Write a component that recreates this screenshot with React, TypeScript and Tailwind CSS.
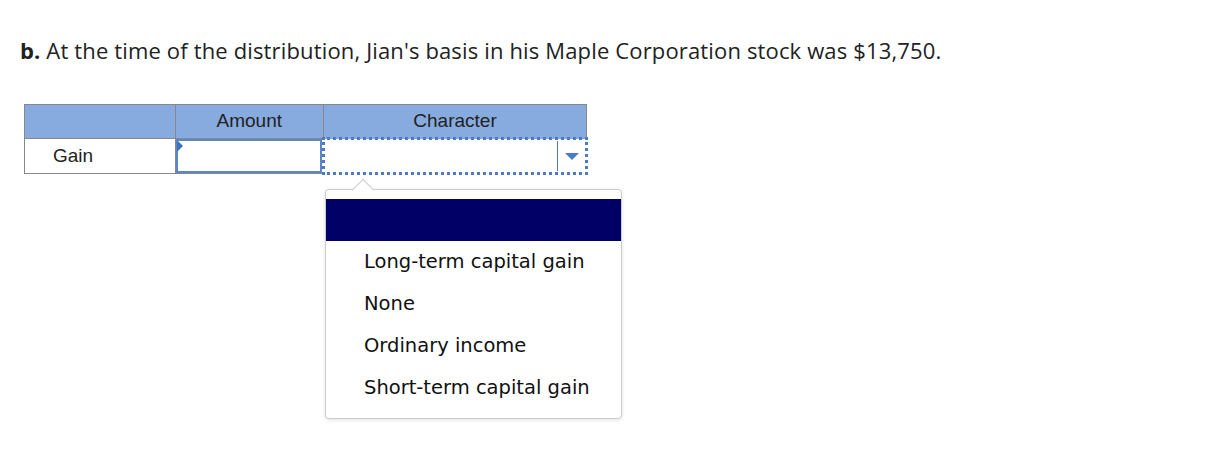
import { useState } from 'react'

const options = ['Long-term capital gain', 'None', 'Ordinary income', 'Short-term capital gain']

export default function App() {
  const [amount, setAmount] = useState('')

  return (
    <div className="w-[1228px] h-[466px] bg-white text-[#222] relative overflow-hidden">
      <p className="pl-5 pt-[36px] text-[22px] tracking-[0.15px] leading-[28px] font-['Open_Sans','Helvetica',sans-serif]">
        <b>b.</b> At the time of the distribution, Jian&apos;s basis in his Maple Corporation stock was $13,750.
      </p>

      <div className="ml-6 mt-[40px] relative w-[564px]">
        <table className="border-collapse font-['Liberation_Sans','Arial',sans-serif] text-[19px] text-[#222]">
          <thead>
            <tr className="h-[34px] bg-[#87abdf]">
              <th className="w-[151px] border border-[#888] font-normal" />
              <th className="w-[149px] border border-[#888] font-normal">Amount</th>
              <th className="w-[264px] border border-[#888] font-normal">Character</th>
            </tr>
          </thead>
          <tbody>
            <tr className="h-[35px]">
              <td className="border border-[#888] pl-7">Gain</td>
              <td className="border border-[#888] p-0 relative">
                <input
                  value={amount}
                  onChange={(e) => setAmount(e.target.value)}
                  className="block w-full h-[34px] border-2 border-[#5a87c9] outline-none px-2"
                />
                <span className="absolute left-[1px] top-[1px] w-0 h-0 border-y-[6px] border-y-transparent border-l-[6px] border-l-[#3c72c0]" />
              </td>
              <td className="p-0 border-[3px] border-dotted border-[#4a7bc4]">
                <div className="flex h-[30px] bg-white">
                  <div className="flex-1" />
                  <div className="w-[28px] border-l border-[#4a7bc4] flex items-center justify-center">
                    <span className="w-0 h-0 border-x-[7px] border-x-transparent border-t-[7px] border-t-[#4a7bc4]" />
                  </div>
                </div>
              </td>
            </tr>
          </tbody>
        </table>

        {/* dropdown menu */}
        <div className="absolute left-[301px] top-[85px] w-[297px] h-[230px] bg-white border border-[#ccc] rounded-[4px] shadow-[0_1px_4px_rgba(0,0,0,0.12)] pt-[9px]">
          <span className="absolute left-[29px] -top-[9px] w-[16px] h-[16px] bg-white border-l border-t border-[#ccc] rotate-45 translate-y-[1px]" />
          <div className="h-[42px] bg-[#000066] relative" />
          <ul className="font-['DejaVu_Sans','Verdana',sans-serif] text-[19.5px] text-[#111]">
            {options.map((o) => (
              <li key={o} className="h-[42px] pl-[38px] flex items-center">
                {o}
              </li>
            ))}
          </ul>
        </div>
      </div>
    </div>
  )
}
